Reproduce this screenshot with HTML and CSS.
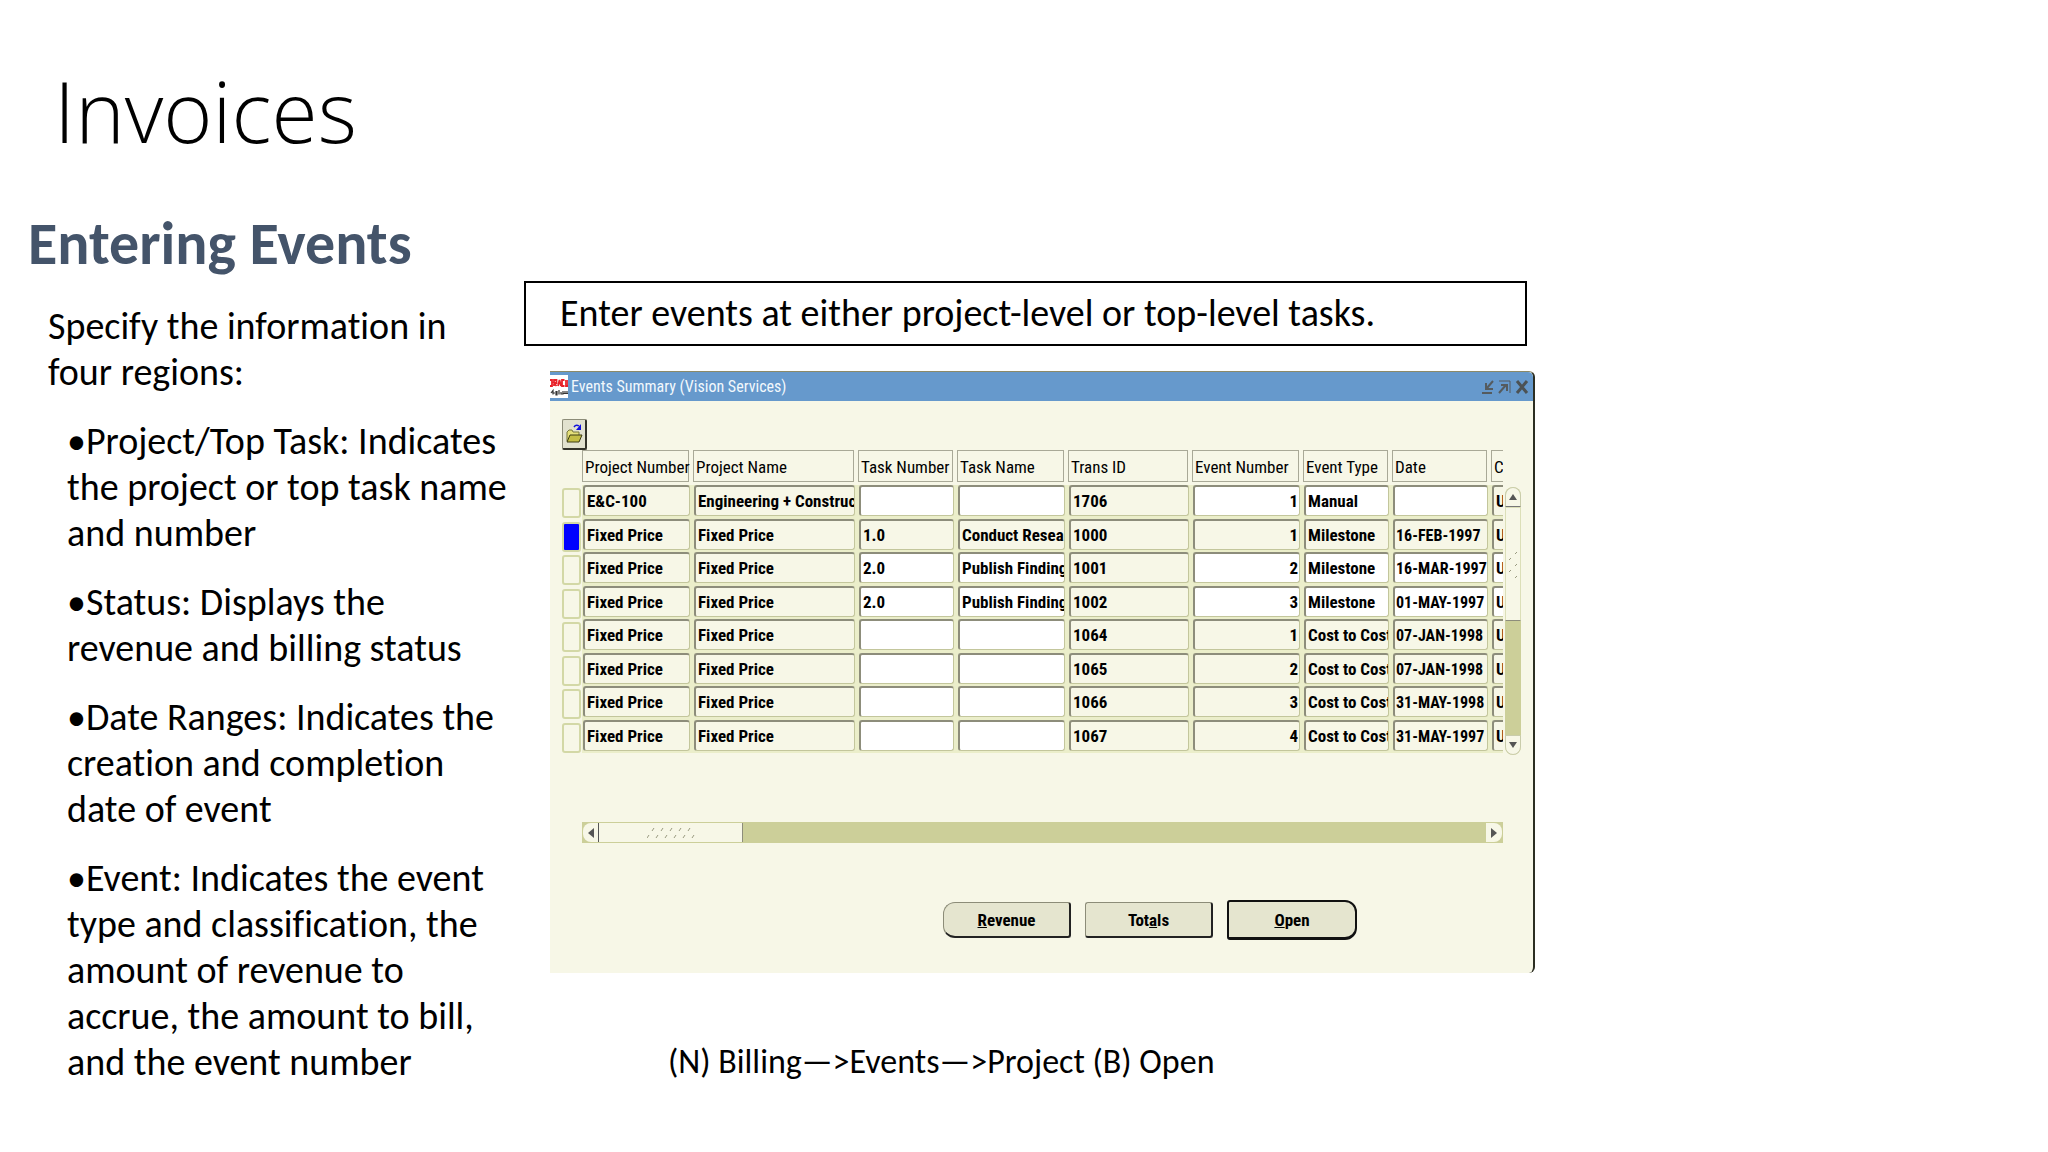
FILE: index.html
```html
<!DOCTYPE html>
<html lang="en">
<head>
<meta charset="utf-8">
<title>Invoices - Entering Events</title>
<link rel="stylesheet" href="styles.css">
</head>
<body>
<main class="slide">
  <h1 class="slide-title">Invoices</h1>
  <div class="columns">
    <section class="notes">
      <h2 class="notes-title">Entering Events</h2>
      <p class="intro">Specify the information in four regions:</p>
      <ul class="points">
        <li>Project/Top Task: Indicates the project or top task name and number</li>
        <li>Status: Displays the revenue and billing status</li>
        <li>Date Ranges: Indicates the creation and completion date of event</li>
        <li>Event: Indicates the event type and classification, the amount of revenue to accrue, the amount to bill, and the event number</li>
      </ul>
    </section>

    <section class="demo">
      <p class="callout">Enter events at either project-level or top-level tasks.</p>

      <div class="window">
        <header class="titlebar">
          <svg class="logo" viewBox="0 0 18 23" aria-hidden="true">
            <rect width="18" height="23" fill="#fff"/>
            <path d="M0 5h2v6H0M4 11V5h2.500v3H4l2.500 3M8 11l1.500-6 1.500 6M14.500 5H12v6h2.500M16 5v6h2V5" fill="none" stroke="#e8222a" stroke-width="1.800"/>
            <path d="M1 18l2-2.500v4M3 18h2M6 16v4h1v-4M9 15v4.500M11 17v2h2v-3M13 18.500h5M15 16v3M17 16v3" fill="none" stroke="#333" stroke-width="1.200"/>
          </svg>
          <span class="window-name">Events Summary (Vision Services)</span>
          <button class="win-btn" aria-label="Minimize"><svg viewBox="0 0 14 16"><path d="M1 14h10M12 2L6 9M5 4v6h7" fill="none" stroke="#555b5e" stroke-width="2"/></svg></button>
          <button class="win-btn" aria-label="Maximize"><svg viewBox="0 0 14 16"><path d="M1 2h11v12" fill="none" stroke="#555b5e" stroke-width="1"/><path d="M1 14l7-8M3 6h6v6" fill="none" stroke="#555b5e" stroke-width="2"/></svg></button>
          <button class="win-btn" aria-label="Close"><svg viewBox="0 0 14 16"><path d="M2 2l10 12M12 2L2 14" fill="none" stroke="#4c5254" stroke-width="3"/></svg></button>
        </header>

        <div class="window-body">
          <button class="folder" aria-label="Open folder">
            <svg viewBox="0 0 18 22"><path d="M2 18V9l2-2h3l1 2h6v3" fill="#e4df7a" stroke="#77773a"/><path d="M2 19l3-7h12l-3 7z" fill="#c3bd45" stroke="#3c3c14"/><path d="M9 4q2-3 5-1" fill="none" stroke="#11d" stroke-width="1.500"/><path d="M16 1v6h-5z" fill="#11d"/></svg>
          </button>

          <div class="grid">
            <div class="grid-view">
              <table class="events">
                <colgroup>
                  <col class="c-sel"><col class="c-pnum"><col class="c-pname"><col class="c-tnum"><col class="c-tname"><col class="c-trans"><col class="c-enum"><col class="c-type"><col class="c-date"><col class="c-cur">
                </colgroup>
                <thead>
                  <tr><td></td><th><span>Project Number</span></th><th><span>Project Name</span></th><th><span>Task Number</span></th><th><span>Task Name</span></th><th><span>Trans ID</span></th><th><span>Event Number</span></th><th><span>Event Type</span></th><th><span>Date</span></th><th><span>C</span></th></tr>
                </thead>
                <tbody>
                  <tr><td class="sel"><button aria-label="Record 1"></button></td><td><input aria-label="Project Number" value="E&amp;C-100"></td><td><input aria-label="Project Name" value="Engineering + Construction"></td><td><input class="edit" aria-label="Task Number"></td><td><input class="edit" aria-label="Task Name"></td><td><input aria-label="Trans ID" value="1706"></td><td><input class="edit num" aria-label="Event Number" value="1"></td><td><input class="edit" aria-label="Event Type" value="Manual"></td><td><input class="edit date" aria-label="Date"></td><td><input aria-label="Currency" value="USD"></td></tr>
                  <tr><td class="sel"><button class="current" aria-label="Record 2"></button></td><td><input aria-label="Project Number" value="Fixed Price"></td><td><input aria-label="Project Name" value="Fixed Price"></td><td><input aria-label="Task Number" value="1.0"></td><td><input aria-label="Task Name" value="Conduct Research"></td><td><input aria-label="Trans ID" value="1000"></td><td><input class="num" aria-label="Event Number" value="1"></td><td><input aria-label="Event Type" value="Milestone"></td><td><input class="date" aria-label="Date" value="16-FEB-1997"></td><td><input aria-label="Currency" value="USD"></td></tr>
                  <tr><td class="sel"><button aria-label="Record 3"></button></td><td><input aria-label="Project Number" value="Fixed Price"></td><td><input aria-label="Project Name" value="Fixed Price"></td><td><input class="edit" aria-label="Task Number" value="2.0"></td><td><input class="edit" aria-label="Task Name" value="Publish Findings"></td><td><input aria-label="Trans ID" value="1001"></td><td><input class="edit num" aria-label="Event Number" value="2"></td><td><input class="edit" aria-label="Event Type" value="Milestone"></td><td><input class="edit date" aria-label="Date" value="16-MAR-1997"></td><td><input class="edit" aria-label="Currency" value="USD"></td></tr>
                  <tr><td class="sel"><button aria-label="Record 4"></button></td><td><input aria-label="Project Number" value="Fixed Price"></td><td><input aria-label="Project Name" value="Fixed Price"></td><td><input class="edit" aria-label="Task Number" value="2.0"></td><td><input class="edit" aria-label="Task Name" value="Publish Findings"></td><td><input aria-label="Trans ID" value="1002"></td><td><input class="edit num" aria-label="Event Number" value="3"></td><td><input class="edit" aria-label="Event Type" value="Milestone"></td><td><input class="edit date" aria-label="Date" value="01-MAY-1997"></td><td><input class="edit" aria-label="Currency" value="USD"></td></tr>
                  <tr><td class="sel"><button aria-label="Record 5"></button></td><td><input aria-label="Project Number" value="Fixed Price"></td><td><input aria-label="Project Name" value="Fixed Price"></td><td><input class="edit" aria-label="Task Number"></td><td><input class="edit" aria-label="Task Name"></td><td><input aria-label="Trans ID" value="1064"></td><td><input class="num" aria-label="Event Number" value="1"></td><td><input aria-label="Event Type" value="Cost to Cost"></td><td><input class="date" aria-label="Date" value="07-JAN-1998"></td><td><input aria-label="Currency" value="USD"></td></tr>
                  <tr><td class="sel"><button aria-label="Record 6"></button></td><td><input aria-label="Project Number" value="Fixed Price"></td><td><input aria-label="Project Name" value="Fixed Price"></td><td><input class="edit" aria-label="Task Number"></td><td><input class="edit" aria-label="Task Name"></td><td><input aria-label="Trans ID" value="1065"></td><td><input class="num" aria-label="Event Number" value="2"></td><td><input aria-label="Event Type" value="Cost to Cost"></td><td><input class="date" aria-label="Date" value="07-JAN-1998"></td><td><input aria-label="Currency" value="USD"></td></tr>
                  <tr><td class="sel"><button aria-label="Record 7"></button></td><td><input aria-label="Project Number" value="Fixed Price"></td><td><input aria-label="Project Name" value="Fixed Price"></td><td><input class="edit" aria-label="Task Number"></td><td><input class="edit" aria-label="Task Name"></td><td><input aria-label="Trans ID" value="1066"></td><td><input class="num" aria-label="Event Number" value="3"></td><td><input aria-label="Event Type" value="Cost to Cost"></td><td><input class="date" aria-label="Date" value="31-MAY-1998"></td><td><input aria-label="Currency" value="USD"></td></tr>
                  <tr><td class="sel"><button aria-label="Record 8"></button></td><td><input aria-label="Project Number" value="Fixed Price"></td><td><input aria-label="Project Name" value="Fixed Price"></td><td><input class="edit" aria-label="Task Number"></td><td><input class="edit" aria-label="Task Name"></td><td><input aria-label="Trans ID" value="1067"></td><td><input class="num" aria-label="Event Number" value="4"></td><td><input aria-label="Event Type" value="Cost to Cost"></td><td><input class="date" aria-label="Date" value="31-MAY-1997"></td><td><input aria-label="Currency" value="USD"></td></tr>
                </tbody>
              </table>
            </div>
            <div class="vscroll">
              <button class="arrow up" aria-label="Scroll up"><svg viewBox="0 0 8 6"><path d="M0 6l4-6 4 6z"/></svg></button>
              <div class="thumb"><svg viewBox="0 0 10 32"><path d="M7 3l2-2M1 9l2-2M7 15l2-2M1 21l2-2M7 27l2-2" stroke="#999a80"/></svg></div>
              <button class="arrow down" aria-label="Scroll down"><svg viewBox="0 0 8 6"><path d="M0 0h8l-4 6z"/></svg></button>
            </div>
          </div>

          <div class="hscroll">
            <button class="arrow left" aria-label="Scroll left"><svg viewBox="0 0 6 10"><path d="M6 0v10L0 5z"/></svg></button>
            <div class="thumb"><svg viewBox="0 0 48 12"><path d="M5 4l2-3M14 4l2-3M23 4l2-3M32 4l2-3M41 4l2-3M0 11l2-3M9 11l2-3M18 11l2-3M27 11l2-3M36 11l2-3M45 11l2-3" stroke="#999a80"/></svg></div>
            <button class="arrow right" aria-label="Scroll right"><svg viewBox="0 0 6 10"><path d="M0 0v10l6-5z"/></svg></button>
          </div>

          <div class="actions">
            <button class="action first"><u>R</u>evenue</button>
            <button class="action">Tot<u>a</u>ls</button>
            <button class="action default"><u>O</u>pen</button>
          </div>
        </div>
      </div>

      <p class="path">(N) Billing—&gt;Events—&gt;Project (B) Open</p>
    </section>
  </div>
</main>
</body>
</html>
```
FILE: styles.css
```css
* { box-sizing: border-box; }

body {
  margin: 0;
  background: #fff;
  color: #000;
  font: 38px/46px Carlito, Lato, sans-serif;
  font-variant-ligatures: none;
}

h1, h2, p, ul { margin: 0; padding: 0; }
button, input { margin: 0; padding: 0; border: 0; background: none; font: inherit; color: inherit; }
svg { display: block; }

.slide { padding-top: 54px; }
.slide-title {
  padding-left: 54px;
  font: 300 84px/114px "Open Sans", sans-serif;
}
.columns {
  display: grid;
  grid-template-columns: 524px minmax(0, 1011px);
  margin-top: 41px;
}

/* Left column */
.notes-title {
  padding-left: 28px;
  font-size: 60px;
  line-height: 70px;
  color: #44546a;
}
.intro { margin-top: 24px; padding: 0 60px 0 48px; }
.points { padding: 0 8px 0 67px; list-style: none; }
.points li { margin-top: 23px; }
.points li::before { content: "•"; }

/* Right column */
.demo { padding-top: 72px; }
.callout {
  margin-right: 8px;
  padding: 7px 34px 8px;
  border: 2px solid #000;
}
.path { margin-top: 66px; padding-left: 144px; font-size: 34px; }

/* Application window */
.window {
  margin: 25px 0 0 26px;
  border-top: 1px solid #8c8a68;
  border-right: 2px solid #2c2e22;
  border-radius: 0 6px 6px 0;
  background: #f7f7e7;
  font: 17px/22px "Roboto Condensed", "Liberation Sans", sans-serif;
}
.titlebar {
  display: flex;
  align-items: center;
  gap: 3px;
  height: 29px;
  padding-right: 4px;
  border-radius: 0 5px 0 0;
  background: #6699cc;
  color: #f2f8fc;
  font-size: 16px;
}
.logo { width: 18px; height: 23px; }
.window-name { flex: 1; }
.win-btn { width: 14px; height: 16px; }

.window-body { padding: 18px 12px 33px; }
.folder {
  display: block;
  width: 25px;
  height: 31px;
  padding: 3px 2px;
  border: 1px solid #8c8c78;
  border-right: 2px solid #33332a;
  border-bottom: 2px solid #33332a;
  border-radius: 2px;
  background: #e2e2cf;
}
.grid { display: flex; }
.grid-view { flex: 1; min-width: 0; overflow: hidden; }

.events {
  width: 960px;
  table-layout: fixed;
  border-collapse: collapse;
}
.events th, .events td { padding: 0; vertical-align: top; }
.c-sel { width: 20px; }
.c-pnum { width: 111px; }
.c-pname { width: 165px; }
.c-tnum { width: 99px; }
.c-tname { width: 111px; }
.c-trans { width: 124px; }
.c-enum { width: 111px; }
.c-type { width: 89px; }
.c-date { width: 99px; }
.c-cur { width: 31px; }

.events th { height: 35px; padding-right: 4px; text-align: left; font-weight: 400; }
.events th span {
  display: block;
  height: 32px;
  padding: 5px 0 0 2px;
  border: 1px solid #a9a997;
  white-space: nowrap;
}
.events tbody tr { height: 34px; }
.events tbody tr:nth-child(even) { height: 33px; }
.events tbody td { padding: 0 3px 0 1px; background: #ebeeca; }
.events td input {
  display: block;
  width: 100%;
  height: 31px;
  padding-left: 2px;
  border: 1px solid #c3c69c;
  border-top: 2px solid #8d8d7b;
  border-left: 2px solid #8d8d7b;
  border-radius: 3px;
  background: #f7f7e7;
  font-weight: 700;
}
.events td input.edit { background: #fff; }
.events td input.num { padding-right: 1px; text-align: right; }
.events td input.date { padding-left: 1px; font-size: 16px; }
.events tbody td.sel { padding: 3px 1px 0 0; background: none; }
.sel button {
  display: block;
  width: 19px;
  height: 30px;
  border: 2px solid #d3d8a6;
  border-radius: 3px;
  background: #f7f7e7;
}
.sel button.current { background: #00f; }

/* Scrollbars */
.vscroll {
  display: flex;
  flex-direction: column;
  width: 16px;
  height: 268px;
  margin: 37px 0 0 2px;
  background: #cccf99;
  border-radius: 8px;
  overflow: hidden;
}
.vscroll .thumb { height: 114px; border: 1px solid #dcdfb8; background: #f7f7e7; border-bottom-color: #8d8d7b; }
.vscroll .thumb svg { width: 10px; height: 32px; margin: 43px auto 0; }
.arrow { display: flex; align-items: center; justify-content: center; background: #f7f7e7; }
.arrow path { fill: #555; }
.up, .down { height: 20px; border: 1px solid #c9ccab; }
.up { border-radius: 8px 8px 0 0; border-bottom-color: #777; }
.down { margin-top: auto; border-radius: 0 0 8px 8px; }
.up svg, .down svg { width: 8px; height: 6px; }

.hscroll {
  display: flex;
  height: 21px;
  margin: 67px 18px 0 20px;
  padding: 1px;
  background: #cccf99;
}
.hscroll .thumb { width: 144px; background: #f7f7e7; border-right: 1px solid #8d8d7b; }
.hscroll .thumb svg { width: 48px; height: 12px; margin: 4px auto 0; }
.left { width: 16px; border-radius: 8px 0 0 8px; border-right: 1px solid #555; }
.right { width: 16px; margin-left: auto; border-radius: 0 8px 8px 0; }
.left svg, .right svg { width: 6px; height: 10px; }

/* Window buttons */
.actions {
  display: flex;
  align-items: center;
  gap: 14px;
  height: 40px;
  margin-top: 57px;
  padding-left: 381px;
}
.action {
  width: 128px;
  height: 36px;
  border: 1px solid #8c8c78;
  border-right: 2px solid #222;
  border-bottom: 2px solid #222;
  border-radius: 3px;
  background: #e5e5cf;
  font-weight: 700;
}
.action.first { border-radius: 12px 3px 3px 12px; }
.action.default {
  width: 130px;
  height: 40px;
  border: 2px solid #111;
  border-bottom-width: 3px;
  border-radius: 3px 12px 12px 3px;
}
```
